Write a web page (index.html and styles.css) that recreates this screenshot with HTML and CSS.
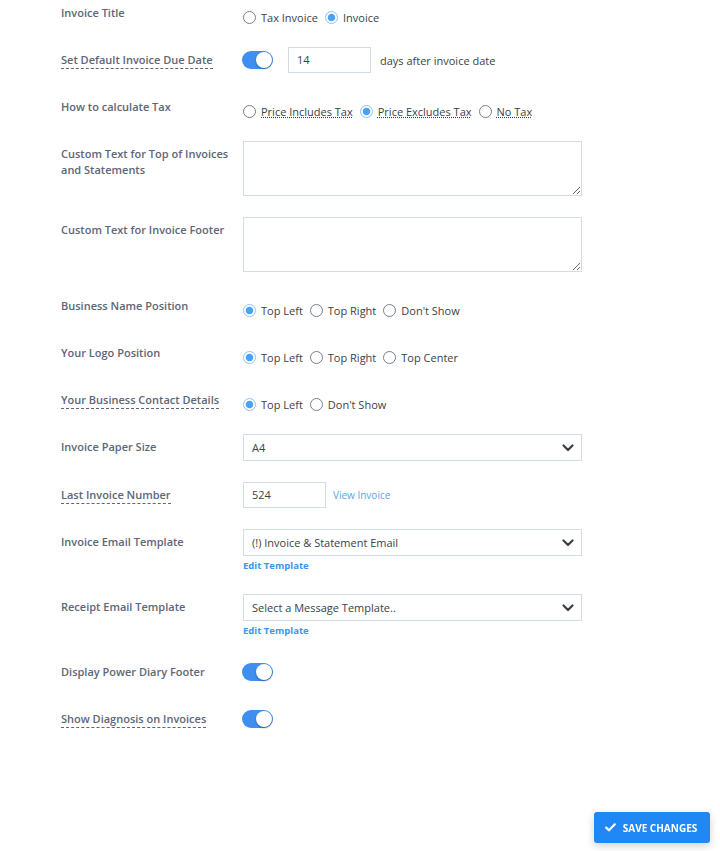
FILE: index.html
```html
<!DOCTYPE html>
<html lang="en">
<head>
<meta charset="utf-8">
<title>Invoice Settings</title>
<link rel="stylesheet" href="styles.css">
</head>
<body>
<div class="page">
  <form class="settings">
    <div class="row">
      <div class="label">Invoice Title</div>
      <div class="control radios">
        <label class="opt"><span class="radio"></span>Tax Invoice</label>
        <label class="opt"><span class="radio on"></span>Invoice</label>
      </div>
    </div>

    <div class="row">
      <div class="label"><span class="hint">Set Default Invoice Due Date</span></div>
      <div class="control inline">
        <span class="toggle"><span class="knob"></span></span>
        <div class="input short">14</div>
        <span class="after">days after invoice date</span>
      </div>
    </div>

    <div class="row">
      <div class="label">How to calculate Tax</div>
      <div class="control radios">
        <label class="opt"><span class="radio"></span><span class="dotted">Price Includes Tax</span></label>
        <label class="opt"><span class="radio on"></span><span class="dotted">Price Excludes Tax</span></label>
        <label class="opt"><span class="radio"></span><span class="dotted">No Tax</span></label>
      </div>
    </div>

    <div class="row">
      <div class="label">Custom Text for Top of Invoices and Statements</div>
      <div class="control"><textarea class="area"></textarea></div>
    </div>

    <div class="row">
      <div class="label">Custom Text for Invoice Footer</div>
      <div class="control"><textarea class="area"></textarea></div>
    </div>

    <div class="row">
      <div class="label">Business Name Position</div>
      <div class="control radios">
        <label class="opt"><span class="radio on"></span>Top Left</label>
        <label class="opt"><span class="radio"></span>Top Right</label>
        <label class="opt"><span class="radio"></span>Don't Show</label>
      </div>
    </div>

    <div class="row">
      <div class="label">Your Logo Position</div>
      <div class="control radios">
        <label class="opt"><span class="radio on"></span>Top Left</label>
        <label class="opt"><span class="radio"></span>Top Right</label>
        <label class="opt"><span class="radio"></span>Top Center</label>
      </div>
    </div>

    <div class="row">
      <div class="label"><span class="hint">Your Business Contact Details</span></div>
      <div class="control radios">
        <label class="opt"><span class="radio on"></span>Top Left</label>
        <label class="opt"><span class="radio"></span>Don't Show</label>
      </div>
    </div>

    <div class="row">
      <div class="label">Invoice Paper Size</div>
      <div class="control">
        <div class="select"><span>A4</span><svg class="chev" width="12" height="8" viewBox="0 0 12 8"><path d="M1.5 1.5 L6 6 L10.5 1.5" fill="none" stroke="#3a3f47" stroke-width="2.2" stroke-linecap="round" stroke-linejoin="round"/></svg></div>
      </div>
    </div>

    <div class="row">
      <div class="label"><span class="hint">Last Invoice Number</span></div>
      <div class="control inline">
        <div class="input short">524</div>
        <a class="view" href="#">View Invoice</a>
      </div>
    </div>

    <div class="row">
      <div class="label">Invoice Email Template</div>
      <div class="control">
        <div class="select"><span>(!) Invoice &amp; Statement Email</span><svg class="chev" width="12" height="8" viewBox="0 0 12 8"><path d="M1.5 1.5 L6 6 L10.5 1.5" fill="none" stroke="#3a3f47" stroke-width="2.2" stroke-linecap="round" stroke-linejoin="round"/></svg></div>
        <a class="edit" href="#">Edit Template</a>
      </div>
    </div>

    <div class="row">
      <div class="label">Receipt Email Template</div>
      <div class="control">
        <div class="select"><span>Select a Message Template..</span><svg class="chev" width="12" height="8" viewBox="0 0 12 8"><path d="M1.5 1.5 L6 6 L10.5 1.5" fill="none" stroke="#3a3f47" stroke-width="2.2" stroke-linecap="round" stroke-linejoin="round"/></svg></div>
        <a class="edit" href="#">Edit Template</a>
      </div>
    </div>

    <div class="row">
      <div class="label">Display Power Diary Footer</div>
      <div class="control inline">
        <span class="toggle"><span class="knob"></span></span>
      </div>
    </div>

    <div class="row">
      <div class="label"><span class="hint">Show Diagnosis on Invoices</span></div>
      <div class="control inline">
        <span class="toggle"><span class="knob"></span></span>
      </div>
    </div>
  </form>

  <button class="save" type="button">
    <svg width="11" height="9" viewBox="0 0 11 9"><path d="M1.2 4.6 L4 7.3 L9.8 1.3" fill="none" stroke="#fff" stroke-width="2.2" stroke-linecap="round" stroke-linejoin="round"/></svg>
    <span>SAVE CHANGES</span>
  </button>
</div>
</body>
</html>
```

FILE: styles.css
```css
* { box-sizing: border-box; }

html, body {
  margin: 0;
  padding: 0;
  background: #ffffff;
}

body {
  font-family: "Open Sans", "Liberation Sans", sans-serif;
  font-size: 11px;
  color: #3a3f47;
}

.page {
  padding: 0 0 0 61px;
  min-height: 851px;
}

.settings {
  margin-top: 0;
  display: flex;
  flex-direction: column;
  gap: 21px;
}

.row {
  display: flex;
  align-items: flex-start;
  min-height: 26px;
}

.label {
  width: 172px;
  margin-right: 10px;
  padding-top: 5px;
  font-size: 11px;
  line-height: 16px;
  font-weight: 600;
  color: #5d6677;
}

.hint {
  border-bottom: 1px dashed #5d6677;
  padding-bottom: 1px;
}

.control {
  width: 339px;
}

.inline {
  display: flex;
  align-items: center;
  min-height: 26px;
}

.radios {
  display: flex;
  align-items: center;
  padding-top: 10px;
  line-height: 15px;
}

.opt {
  display: inline-flex;
  align-items: center;
  margin-right: 7px;
  color: #3a3f47;
  white-space: nowrap;
}

.radio {
  width: 13px;
  height: 13px;
  border-radius: 50%;
  border: 1px solid #767e8c;
  background: #fff;
  margin-right: 5px;
  flex: none;
}

.radio.on {
  border-color: #8cc3f5;
  background: radial-gradient(circle, #4aa3f2 0 3.3px, #ffffff 4.2px);
}

.dotted {
  text-decoration: underline dotted #3a3f47;
  text-underline-offset: 1px;
}

.toggle {
  position: relative;
  width: 31px;
  height: 18px;
  border-radius: 9px;
  background: #3f8ff0;
  margin-left: -1px;
  flex: none;
}

.knob {
  position: absolute;
  top: 1px;
  right: 1px;
  width: 16px;
  height: 16px;
  border-radius: 50%;
  background: #fff;
  box-shadow: 0 1px 2px rgba(0, 0, 0, 0.35);
}

.input {
  height: 26px;
  border: 1px solid #d3dbe6;
  padding: 0 8px;
  line-height: 24px;
  font-size: 11px;
  color: #3a3f47;
}

.input.short {
  width: 83px;
}

.toggle + .input {
  margin-left: 15px;
}

.after {
  margin-left: 9px;
  color: #3a3f47;
}

.area {
  display: block;
  width: 339px;
  height: 55px;
  border: 1px solid #d3dbe6;
  border-radius: 0;
  padding: 6px 8px;
  font-family: inherit;
  font-size: 11px;
  resize: vertical;
  margin: 0;
}

.select {
  display: flex;
  align-items: center;
  justify-content: space-between;
  height: 27px;
  border: 1px solid #d3dbe6;
  padding: 0 7px 0 8px;
  color: #3a3f47;
  font-size: 11px;
}

.chev {
  display: block;
}

.view {
  margin-left: 7px;
  font-size: 10px;
  color: #5aa4ec;
  text-decoration: none;
}

.edit {
  display: block;
  margin-top: 3px;
  font-size: 9.5px;
  line-height: 14px;
  font-weight: 700;
  color: #3b95ee;
  text-decoration: none;
}

.save {
  position: fixed;
  right: 10px;
  bottom: 8px;
  width: 116px;
  height: 31px;
  border: none;
  border-radius: 3px;
  background: #1f88f5;
  color: #fff;
  font-family: "Open Sans", "Liberation Sans", sans-serif;
  font-size: 10px;
  font-weight: 700;
  display: flex;
  align-items: center;
  justify-content: center;
  gap: 7px;
  padding: 0 2px 0 0;
  box-shadow: 0 3px 8px rgba(0, 0, 0, 0.18);
}
```
